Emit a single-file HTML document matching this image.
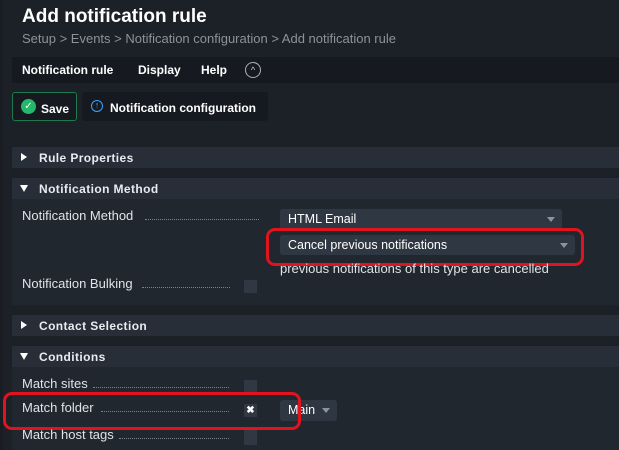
<!DOCTYPE html>
<html><head><style>
*{margin:0;padding:0;box-sizing:border-box}
body{width:619px;height:450px;overflow:hidden;background:#1c2128;font-family:"Liberation Sans",sans-serif;color:#dfe3e8;position:relative}
.a{position:absolute;white-space:nowrap}
.h1{left:22px;top:6px;font-size:19px;font-weight:bold;color:#fff}
.bc{left:22px;top:31px;font-size:13px;color:#8a929c}
.menu{left:12px;top:57px;width:607px;height:26px;background:#161a20}
.mi{top:63px;font-size:12px;font-weight:bold;color:#fff}
.btn{top:92px;height:29px;background:#161a20;border-radius:3px;font-size:12px;font-weight:bold;color:#fff;padding:8px 0 0 0}
.sh{left:12px;width:607px;height:21px;background:#272e37;font-size:12px;font-weight:bold;color:#e8ecf0;padding:4px 0 0 27px;letter-spacing:.4px}
.sb{left:12px;width:607px;background:#21272f}
.tri{position:absolute;left:9px;top:6px;width:0;height:0}
.r{border-top:4px solid transparent;border-bottom:4px solid transparent;border-left:6px solid #fff}
.d{top:7px;border-left:4px solid transparent;border-right:4px solid transparent;border-top:7px solid #fff;left:8px}
.lbl{font-size:13px;color:#dfe3e8}
.dots{border-bottom:1px dotted #7a828c;position:absolute}
.sel{background:#2f3742;border-radius:3px;font-size:12.5px;color:#fff;padding:3px 0 0 8px;height:20px}
.sel:after{content:"";position:absolute;right:7px;top:8px;border-left:4px solid transparent;border-right:4px solid transparent;border-top:5px solid #8d949c}
.cb{width:13px;height:13px;background:#303843}
.red{border:3px solid #e0131f;border-radius:9px}
</style></head><body>
<div class="a" style="left:0;top:0;width:3px;height:450px;background:#191d23"></div>
<div class="a h1">Add notification rule</div>
<div class="a bc">Setup &gt; Events &gt; Notification configuration &gt; Add notification rule</div>
<div class="a menu"></div>
<div class="a mi" style="left:22px">Notification rule</div>
<div class="a mi" style="left:138px">Display</div>
<div class="a mi" style="left:201px">Help</div>
<div class="a" style="left:245px;top:62px;width:16px;height:16px;border:1px solid #aab0b8;border-radius:50%;font-size:9px;color:#ccc;text-align:center;line-height:14px">^</div>
<div class="a btn" style="left:12px;width:65px;border:1px solid #1d7a4a;padding-left:28px;padding-top:9px">Save</div>
<div class="a" style="left:21px;top:99px;width:15px;height:15px;border-radius:50%;background:#26b86a;color:#fff;font-size:10px;text-align:center;line-height:15px">✓</div>
<div class="a btn" style="left:82px;width:186px;padding-left:28px;padding-top:9px">Notification configuration</div>
<div class="a" style="left:91px;top:100px;width:12px;height:12px;border-radius:50%;border:1.5px solid #3aa3ff;color:#3aa3ff;font-size:9px;text-align:center;line-height:9px;font-weight:bold">↑</div>

<div class="a sh" style="top:147px"><span class="tri r"></span>Rule Properties</div>
<div class="a sh" style="top:178px"><span class="tri d"></span>Notification Method</div>
<div class="a sb" style="top:199px;height:106px"></div>
<div class="a lbl" style="left:22px;top:208px">Notification Method</div>
<div class="dots" style="left:145px;top:219px;width:114px"></div>
<div class="a sel" style="left:280px;top:209px;width:282px">HTML Email</div>
<div class="a sel" style="left:280px;top:235px;width:295px">Cancel previous notifications</div>
<div class="a red" style="left:266px;top:228px;width:318px;height:38px"></div>
<div class="a lbl" style="left:280px;top:261px">previous notifications of this type are cancelled</div>
<div class="a lbl" style="left:22px;top:276px">Notification Bulking</div>
<div class="dots" style="left:142px;top:287px;width:88px"></div>
<div class="a cb" style="left:244px;top:280px"></div>

<div class="a sh" style="top:315px"><span class="tri r"></span>Contact Selection</div>
<div class="a sh" style="top:346px"><span class="tri d"></span>Conditions</div>
<div class="a sb" style="top:367px;height:83px"></div>
<div class="a lbl" style="left:22px;top:376px">Match sites</div>
<div class="dots" style="left:93px;top:387px;width:136px"></div>
<div class="a cb" style="left:244px;top:380px"></div>
<div class="a lbl" style="left:22px;top:400px">Match folder</div>
<div class="dots" style="left:101px;top:411px;width:128px"></div>
<div class="a cb" style="left:244px;top:404px;color:#fff;font-size:10px;text-align:center;line-height:13px;font-weight:bold">✖</div>
<div class="a sel" style="left:280px;top:400px;width:57px;height:21px">Main</div>
<div class="a red" style="left:3px;top:392px;width:298px;height:38px"></div>
<div class="a lbl" style="left:22px;top:427px">Match host tags</div>
<div class="dots" style="left:119px;top:438px;width:110px"></div>
<div class="a cb" style="left:244px;top:430px;height:15px"></div>
</body></html>
